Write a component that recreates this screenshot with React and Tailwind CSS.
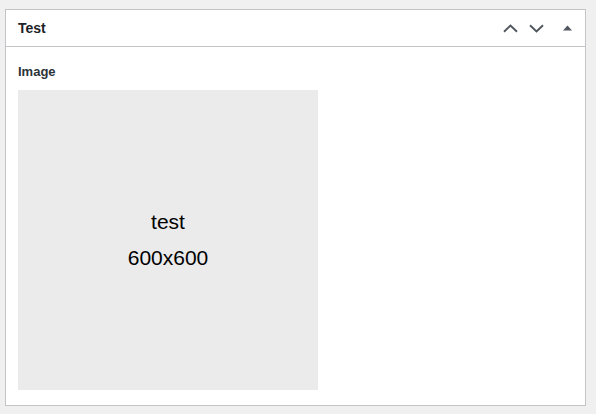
import React from "react";

export default function App() {
  return (
    <div className="w-[596px] h-[414px] bg-[#f0f0f1] pl-[5px] pt-[9px] pr-[10px]" style={{ fontFamily: '"Liberation Sans", Arial, sans-serif' }}>
      <div className="w-[581px] h-[397px] bg-white border border-[#c3c4c7] flex flex-col">
        <div className="h-[37px] border-b border-[#c3c4c7] flex items-center pl-[12px] pr-[13px]">
          <span className="text-[14px] font-bold text-[#1d2327] leading-none">Test</span>
          <div className="ml-auto flex items-center">
            <svg width="15" height="9" viewBox="0 0 15 9" className="mr-[11px]">
              <path d="M1 7.8 L7.5 1.5 L14 7.8" fill="none" stroke="#50575e" strokeWidth="1.9" />
            </svg>
            <svg width="15" height="9" viewBox="0 0 15 9" className="mr-[19px]">
              <path d="M1 1.2 L7.5 7.5 L14 1.2" fill="none" stroke="#50575e" strokeWidth="1.9" />
            </svg>
            <svg width="9" height="6" viewBox="0 0 9 6" className="mb-[1px]">
              <path d="M0 5.5 L4.5 0.5 L9 5.5 Z" fill="#50575e" />
            </svg>
          </div>
        </div>
        <div className="pl-[12px] pt-[18px]">
          <div className="text-[13px] font-bold text-[#2c3338] leading-none">Image</div>
          <div className="mt-[12px] w-[300px] h-[300px] bg-[#ebebeb] flex flex-col items-center justify-center text-black text-[21px] leading-[36px]">
            <span>test</span>
            <span>600x600</span>
          </div>
        </div>
      </div>
    </div>
  );
}
